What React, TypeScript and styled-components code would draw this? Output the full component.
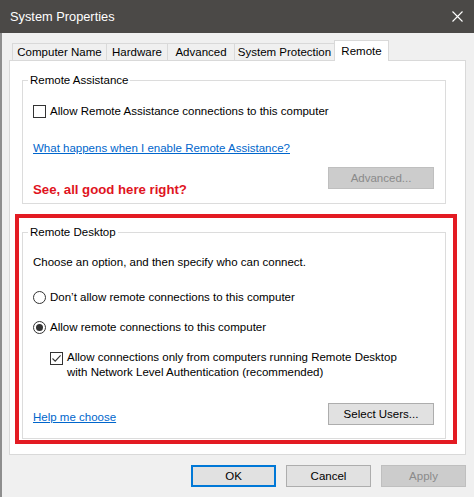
import React from "react";
import styled, { createGlobalStyle } from "styled-components";

const Global = createGlobalStyle`
  html, body { margin: 0; padding: 0; }
  body {
    width: 474px;
    height: 497px;
    overflow: hidden;
    background: #f0f0f0;
    font-family: "Liberation Sans", Arial, sans-serif;
    font-size: 11.5px;
    color: #000;
  }
`;

const Window = styled.div`
  width: 474px;
  height: 497px;
  display: flex;
  flex-direction: column;
  background: #f0f0f0;
`;

const TitleBar = styled.div`
  height: 33px;
  flex: none;
  background: #4b4947;
  display: flex;
  align-items: center;
  justify-content: space-between;
  padding: 0 11px 0 10px;
  box-sizing: border-box;
`;

const Title = styled.span`
  color: #ffffff;
  font-size: 12.8px;
  line-height: 16px;
  margin-top: 1px;
`;

const Body = styled.div`
  flex: 1;
  border-left: 2px solid #8e8e8e;
  padding: 7px 8px 0 7px;
  display: flex;
  flex-direction: column;
`;

const TabStrip = styled.div`
  display: flex;
  align-items: flex-end;
  height: 20px;
  padding-left: 3px;
`;

const Tab = styled.div<{ $w: number; $active?: boolean }>`
  position: relative;
  z-index: ${(p) => (p.$active ? 2 : 1)};
  width: ${(p) => p.$w}px;
  height: ${(p) => (p.$active ? 21 : 17)}px;
  margin-bottom: ${(p) => (p.$active ? -1 : 0)}px;
  margin-right: -1px;
  box-sizing: border-box;
  border: 1px solid #d9d9d9;
  border-bottom: none;
  background: ${(p) => (p.$active ? "#ffffff" : "#f0f0f0")};
  display: flex;
  justify-content: center;
  align-items: ${(p) => (p.$active ? "flex-start" : "center")};
  padding-top: ${(p) => (p.$active ? 2 : 0)}px;
  line-height: 16px;
  white-space: nowrap;
`;

const Panel = styled.div`
  background: #ffffff;
  border: 1px solid #d9d9d9;
  padding: 11px 0 10px 0;
  display: flex;
  flex-direction: column;
`;

const GroupBox = styled.fieldset<{ $pb: number }>`
  margin: 0;
  min-width: 0;
  border: 1px solid #dcdcdc;
  padding: 0 11px ${(p) => p.$pb}px 10px;
  display: flex;
  flex-direction: column;
`;

const TopGroup = styled(GroupBox)`
  margin-left: 12px;
  width: 424px;
  box-sizing: border-box;
`;

const Legend = styled.legend`
  padding: 0 2px;
  margin-left: -5px;
  line-height: 16px;
`;

const Highlight = styled.div`
  align-self: flex-start;
  margin: 10px 0 0 5px;
  width: 442px;
  box-sizing: border-box;
  border: 4px solid #e31b23;
  padding: 6px 7px 1px 3px;
`;

const Row = styled.div<{ $mt: number; $indent?: number }>`
  display: flex;
  align-items: center;
  gap: 4px;
  margin-top: ${(p) => p.$mt}px;
  margin-left: ${(p) => p.$indent ?? 0}px;
  line-height: 16px;
  white-space: nowrap;
`;

const WrapRow = styled.div<{ $mt: number; $indent?: number }>`
  display: flex;
  align-items: flex-start;
  gap: 4px;
  margin-top: ${(p) => p.$mt}px;
  margin-left: ${(p) => p.$indent ?? 0}px;
  line-height: 15px;
`;

const Text = styled.div<{ $mt?: number }>`
  margin-top: ${(p) => p.$mt ?? 0}px;
  line-height: 16px;
  white-space: nowrap;
`;

const Link = styled.a<{ $mt?: number; $self?: string }>`
  display: block;
  align-self: ${(p) => p.$self ?? "flex-start"};
  margin-top: ${(p) => p.$mt ?? 0}px;
  color: #0066cc;
  text-decoration: underline;
  line-height: 16px;
  white-space: nowrap;
  cursor: pointer;
`;

const Box = styled.span<{ $mt?: number }>`
  flex: none;
  width: 13px;
  height: 13px;
  margin-top: ${(p) => p.$mt ?? 0}px;
  box-sizing: border-box;
  border: 1px solid #333333;
  background: #ffffff;
  display: flex;
  align-items: center;
  justify-content: center;
`;

const Radio = styled.span<{ $on?: boolean }>`
  flex: none;
  width: 13px;
  height: 13px;
  box-sizing: border-box;
  border-radius: 50%;
  border: 1px solid #333333;
  background: #ffffff;
  display: flex;
  align-items: center;
  justify-content: center;
  &::after {
    content: "";
    display: ${(p) => (p.$on ? "block" : "none")};
    width: 7px;
    height: 7px;
    border-radius: 50%;
    background: #333333;
  }
`;

const SplitRow = styled.div<{ $mt: number; $align: string }>`
  display: flex;
  justify-content: space-between;
  align-items: ${(p) => p.$align};
  margin-top: ${(p) => p.$mt}px;
`;

const Note = styled.div`
  margin-top: 14px;
  color: #e0141e;
  font-weight: bold;
  font-size: 13.2px;
  line-height: 18px;
  white-space: nowrap;
`;

const Button = styled.button<{ $w: number; $disabled?: boolean; $default?: boolean }>`
  width: ${(p) => p.$w}px;
  height: 22px;
  box-sizing: border-box;
  margin: 0;
  padding: 0;
  font-family: "Liberation Sans", Arial, sans-serif;
  font-size: 11.5px;
  background: ${(p) => (p.$disabled ? "#cccccc" : "#e1e1e1")};
  color: ${(p) => (p.$disabled ? "#8a8a8a" : "#000000")};
  border: 1px solid
    ${(p) => (p.$default ? "#0078d7" : p.$disabled ? "#bfbfbf" : "#adadad")};
  box-shadow: ${(p) => (p.$default ? "inset 0 0 0 1px #0078d7" : "none")};
  flex: none;
`;

const ButtonBar = styled.div`
  display: flex;
  justify-content: flex-end;
  gap: 10px;
  margin-top: 10px;
`;

const CloseIcon = () => (
  <svg width="11" height="11" viewBox="0 0 11 11">
    <path d="M0.5 0.5 L10.5 10.5 M10.5 0.5 L0.5 10.5" stroke="#ffffff" strokeWidth="1.1" fill="none" />
  </svg>
);

const Check = () => (
  <svg width="11" height="11" viewBox="0 0 11 11">
    <path d="M1.5 5.5 L4.2 8.2 L9.6 2.4" stroke="#333333" strokeWidth="1.1" fill="none" />
  </svg>
);

const tabs = [
  { label: "Computer Name", w: 95 },
  { label: "Hardware", w: 62 },
  { label: "Advanced", w: 68 },
  { label: "System Protection", w: 101 },
  { label: "Remote", w: 55, active: true },
];

export default function App() {
  return (
    <>
      <Global />
      <Window>
        <TitleBar>
          <Title>System Properties</Title>
          <CloseIcon />
        </TitleBar>
        <Body>
          <TabStrip>
            {tabs.map((t) => (
              <Tab key={t.label} $w={t.w} $active={t.active}>
                {t.label}
              </Tab>
            ))}
          </TabStrip>
          <Panel>
            <TopGroup $pb={4}>
              <Legend>Remote Assistance</Legend>
              <Row $mt={15}>
                <Box />
                <span>Allow Remote Assistance connections to this computer</span>
              </Row>
              <Link $mt={21}>What happens when I enable Remote Assistance?</Link>
              <SplitRow $mt={11} $align="flex-start">
                <Note>See, all good here right?</Note>
                <Button $w={106} $disabled>
                  Advanced...
                </Button>
              </SplitRow>
            </TopGroup>
            <Highlight>
              <GroupBox $pb={13}>
                <Legend>Remote Desktop</Legend>
                <Text $mt={14}>Choose an option, and then specify who can connect.</Text>
                <Row $mt={19}>
                  <Radio />
                  <span>Don’t allow remote connections to this computer</span>
                </Row>
                <Row $mt={14}>
                  <Radio $on />
                  <span>Allow remote connections to this computer</span>
                </Row>
                <WrapRow $mt={15} $indent={17}>
                  <Box $mt={2}>
                    <Check />
                  </Box>
                  <span>
                    Allow connections only from computers running Remote Desktop
                    <br />
                    with Network Level Authentication (recommended)
                  </span>
                </WrapRow>
                <SplitRow $mt={23} $align="flex-end">
                  <Link $self="flex-end">Help me choose</Link>
                  <Button $w={106}>Select Users...</Button>
                </SplitRow>
              </GroupBox>
            </Highlight>
          </Panel>
          <ButtonBar>
            <Button $w={85} $default>
              OK
            </Button>
            <Button $w={85}>Cancel</Button>
            <Button $w={85} $disabled>
              Apply
            </Button>
          </ButtonBar>
        </Body>
      </Window>
    </>
  );
}
